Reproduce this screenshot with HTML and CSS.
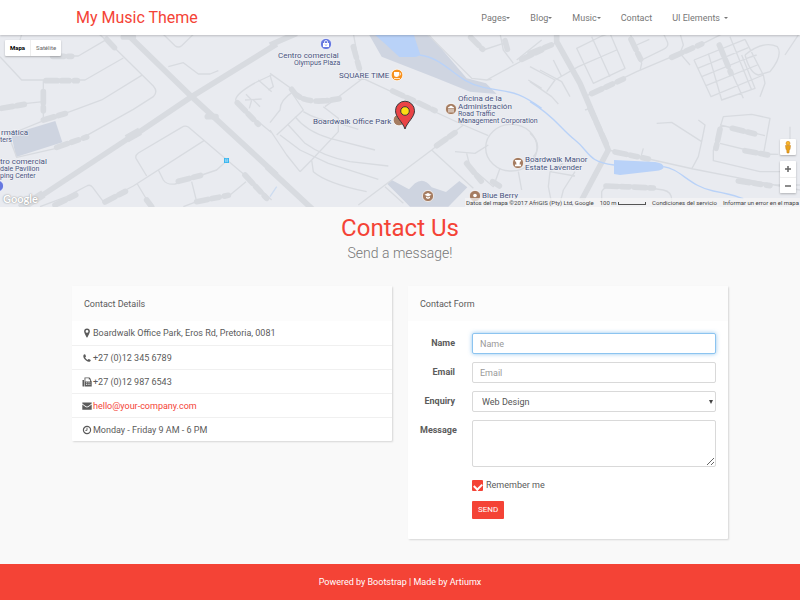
FILE: index.html
```html
<!DOCTYPE html>
<html lang="en">
<head>
<meta charset="utf-8">
<meta name="viewport" content="width=device-width, initial-scale=1">
<title>Contact Us - My Music Theme</title>
<link rel="stylesheet" href="styles.css">
</head>
<body>
<header class="navbar">
  <div class="container navbar-inner">
    <a class="brand" href="#">My Music Theme</a>
    <nav class="nav">
      <a class="nav-link has-menu" href="#">Pages</a>
      <a class="nav-link has-menu" href="#">Blog</a>
      <a class="nav-link has-menu" href="#">Music</a>
      <a class="nav-link" href="#">Contact</a>
      <a class="nav-link has-menu spaced" href="#">UI Elements</a>
    </nav>
  </div>
</header>

<section class="map" aria-label="Map">
  <svg class="map-canvas" viewBox="0 35 800 172" preserveAspectRatio="xMidYMid slice">
    <!-- west -->
    <g transform="scale(.33333)" class="roads">
      <path class="lot" d="M34 403 166 363 187 427 48 471Z"/>
      <path class="major" d="M374 95 575 290 830 525"/>
      <path class="major" d="M830 132 575 290 400 408"/>
      <path class="mid" d="M420 392 120 590"/>
      <path class="wide" d="M420 394 380 416M130 582 60 625"/>
      <path class="minor" d="M295 100 345 145 460 258Q475 275 460 290L400 328 250 412 165 446 50 472 25 405 140 358 210 335 305 300 425 226M370 174 255 240H65L0 170M60 120 66 100M175 168H235L320 118M130 240V360M0 325 80 310 130 305M490 103 525 137Q535 145 545 137L580 103M505 200 550 188 595 222H630L655 212M120 620 200 590 260 558Q270 552 278 562L310 605M310 605 400 558 612 422M440 528 408 475Q405 466 415 459L545 382Q555 375 565 381L740 530 815 600M475 510 490 540Q500 555 525 552L650 510 680 482M575 545 590 605 690 585 738 545M412 552 450 615M590 605 550 620M815 225 770 246Q708 280 707 300L720 320 815 398M775 240 815 275M738 283 755 300 748 325M735 300 785 297M760 300 780 320"/>
      <path class="smudge" d="M320 118 350 150M138 242H232M158 169H215M130 275V332M5 325 80 312M130 360 205 338M170 442 260 411M535 544 610 524M590 605 685 586M735 525 800 595M315 606 388 568M165 615 238 580M440 600 455 620M712 308 775 373M622 350H648M370 111H400"/>
      <rect x="672" y="474" width="15" height="15" fill="#35b4ef"/>
      <path class="transit" d="M676 477H683V484H676ZM676 481H683M677 484V487M682 484V487"/>
    </g>
    <!-- centre -->
    <g transform="translate(270) scale(.33333)" class="roads">
      <path class="park" d="M295 100 335 170 500 235 600 275 680 282 648 250 590 235 475 100Z"/>
      <path class="water" d="M310 100 350 136 388 171H435Q456 168 448 155L430 100Z"/>
      <path class="lot" d="M352 552 395 595 420 620H535L592 562 568 543 528 576 485 562Q462 530 435 550L417 568 365 540Z"/>
      <path class="major" d="M0 135 80 100"/>
      <path class="major" d="M-10 500 130 630"/>
      <path class="minor" d="M250 100 275 238 190 302M70 270 0 220M70 275Q30 300 30 330L0 368M160 320 205 355V395L125 480 90 515M190 302 165 320M265 238H285L580 375 655 407M580 375 485 450 265 615M485 450 610 565M100 335Q140 360 200 368L265 388M75 350Q110 395 180 415L315 450M55 375 105 430Q160 470 240 485L355 498M30 405 90 450 175 490 325 538M125 480 130 515Q170 550 290 575M0 390 50 465 90 515M70 285 100 330 20 405M0 225 10 260-5 270M470 100 500 130 605 235 650 240 760 180M650 240 665 238M595 100 640 150 700 130M690 100 700 150 730 190M740 180 815 120M775 240 815 265M555 455 615 460 655 435M590 460 600 500 670 560 690 505M745 515 755 570M345 560 400 610"/>
      <ellipse class="minor" cx="724" cy="443" rx="77" ry="70"/>
      <path class="smudge" d="M250 140 268 205M65 268Q90 310 170 302L215 295M368 273 495 332M500 437 555 398M590 490 635 545M668 545 688 558M602 112 638 148M705 122 712 148M755 178 815 150"/>
      <path class="stream" d="M448 165C530 175 555 245 640 262S740 270 815 325"/>
      <path class="brook" d="M0 590 20 560"/>
    </g>
    <!-- east -->
    <g transform="translate(530) scale(.33333)" class="roads">
      <path class="major" d="M80 100V125L150 250 235 450 155 600"/>
      <path class="minor" d="M0 165 75 130M165 290 320 215 520 130 580 100M75 240 145 200 260 150M50 275 75 240 0 200M30 210 95 245 120 290M70 180 95 230M0 245 65 290 85 312M140 145 215 108 240 100 285 205 190 250ZM185 110 240 230M300 100 335 190 330 212M335 180 400 148Q418 140 412 125L400 100M320 135 358 118M450 100 460 135 450 160 480 195M492 180 645 118M492 180 543 290 700 225 645 118M503 205 655 143M515 230 668 168M528 257 682 195M535 160 575 300 675 265 635 165M565 130 640 295M600 110 665 270M645 165Q660 220 685 225L720 215Q760 165 742 140Q700 120 645 165M650 175 680 165M700 225 705 250 690 290M765 165 805 105M235 450 490 507 810 570M380 370 425 367 515 425M505 360 525 375 515 425 505 470 485 507M340 445 333 470M550 450 580 350 665 343 720 355 700 465M570 375 705 407M570 430 700 462 745 463M550 450V482L690 515H750M780 380V420M735 555H810M215 620V575Q225 550 300 555L400 570Q425 575 425 600M135 515 100 570 90 610M60 515 135 528M60 515 55 560 65 610M60 515 100 490M0 400Q40 435 10 470M165 330 180 325"/>
      <path class="smudge" d="M0 160 68 133M185 281 280 237M303 118 332 178M425 172 515 132M568 135 603 220M180 325 228 430M255 456 355 477M570 388 558 445M607 385 676 402M645 452 715 465M625 543 720 557M228 558 370 564"/>
      <path class="water" d="M252 480 375 486Q400 490 401 500T375 513L270 525 252 522Z"/>
      <path class="stream" d="M0 305C75 350 90 385 135 420S170 485 252 495M400 500C450 505 480 560 550 573S620 590 640 596"/>
    </g>

    <!-- places -->
    <g class="poi">
      <text x="278" y="58">Centro comercial</text>
      <text class="sub" x="294" y="65">Olympus Plaza</text>
      <text x="339" y="78">SQUARE TIME</text>
      <text x="313" y="124">Boardwalk Office Park</text>
      <text x="458" y="101">Oficina de la</text>
      <text x="458" y="109">Administración</text>
      <text class="sub" x="458" y="116">Road Traffic</text>
      <text class="sub" x="458" y="123">Management Corporation</text>
      <text x="525" y="162">Boardwalk Manor</text>
      <text x="525" y="170">Estate Lavender</text>
      <text x="482" y="198">Blue Berry</text>
      <text x="1" y="135">rmática</text>
      <text class="sub" x="0" y="142">ters</text>
      <text x="0" y="164">tro comercial</text>
      <text class="sub" x="0" y="171">dale Pavilion</text>
      <text class="sub" x="0" y="178">ping Center</text>
    </g>
    <g stroke="#fff" stroke-width=".7">
      <circle cx="326" cy="44" r="5.6" fill="#6678e0"/>
      <circle cx="-2" cy="186" r="5.6" fill="#6678e0"/>
      <circle cx="397" cy="75" r="5.8" fill="#f7911e"/>
      <g fill="#a57c61">
        <circle cx="399" cy="120" r="5.8"/>
        <circle cx="451" cy="109" r="5.6"/>
        <circle cx="518" cy="163" r="5.6"/>
        <circle cx="428" cy="196" r="5.6"/>
        <circle cx="475" cy="196" r="5.6"/>
      </g>
    </g>
    <g fill="#fff">
      <path d="M323 43H329V47H323Z"/>
      <path d="M324.500 43V42A1.500 1.500 0 0 1 327.500 42V43" fill="none" stroke="#fff" stroke-width=".8"/>
      <path d="M324.700 44.500Q326 46.500 327.300 44.500" fill="none" stroke="#6678e0" stroke-width=".6"/>
      <path d="M394 72H399V75Q399 77 396.500 77T394 75ZM394 78H400V78.700H394Z"/>
      <path d="M399 73H400.500V75H399" fill="none" stroke="#fff" stroke-width=".6"/>
      <path d="M448 107.500 451 105.500 454 107.500V108.300H448ZM448.500 109H449.500V111H448.500ZM450.500 109H451.500V111H450.500ZM452.500 109H453.500V111H452.500ZM448 111.500H454V112.300H448Z"/>
      <path d="M515 160H521V161.500H520L519.500 164.500H521V166.200H515V164.500H516.500L516 161.500H515Z"/>
      <path d="M424.500 194.700 428 193 431.500 194.700 428 196.500ZM426 196.500 428 197.500 430 196.500V198L428 199 426 198Z"/>
      <circle cx="475" cy="195.500" r="1.800"/>
    </g>
    <path d="M405 129C402.500 121.500 395.500 117.500 395.500 110.700A9.500 9.500 0 0 1 414.500 110.700C414.500 117.500 407.500 121.500 405 129Z" fill="#ea4345" stroke="#39383b"/>
    <circle cx="405" cy="111" r="4.300" fill="#fcdc14" stroke="#39383b"/>
  </svg>

  <div class="map-types">
    <button class="map-type active" type="button">Mapa</button>
    <button class="map-type" type="button">Satélite</button>
  </div>
  <div class="map-controls">
    <button class="map-button" type="button" aria-label="Street View">
      <svg viewBox="0 0 16 16"><path d="M5.500 6.500H10.500L10 10.500H9.300L9 14H7L6.700 10.500H6Z" fill="#e8a21c" stroke="#c57a14" stroke-width=".5"/><circle cx="8" cy="4.300" r="2" fill="#fbb829" stroke="#c57a14" stroke-width=".5"/></svg>
    </button>
    <div class="zoom-group">
      <button class="map-button" type="button" aria-label="Zoom in"><svg viewBox="0 0 16 16"><path d="M5 8H11M8 5V11" stroke="#666" stroke-width="1.500"/></svg></button>
      <button class="map-button" type="button" aria-label="Zoom out"><svg viewBox="0 0 16 16"><path d="M5 8H11" stroke="#666" stroke-width="1.500"/></svg></button>
    </div>
  </div>
  <a class="google" href="#">Google</a>
  <div class="map-legal">
    <span>Datos del mapa ©2017 AfriGIS (Pty) Ltd, Google</span>
    <span class="scale">100 m <i class="scale-bar"></i></span>
    <a href="#">Condiciones del servicio</a>
    <a href="#">Informar un error en el mapa</a>
  </div>
</section>

<main class="container">
  <div class="heading">
    <h1>Contact Us</h1>
    <p>Send a message!</p>
  </div>
  <div class="columns">
    <section class="card">
      <h2 class="card-title">Contact Details</h2>
      <ul class="details">
        <li><svg class="icon" viewBox="0 0 10 10"><path fill-rule="evenodd" d="M5 .5A2.900 2.900 0 0 1 7.900 3.400C7.900 4.500 6.500 7 5.600 9Q5 10 4.400 9C3.500 7 2.100 4.500 2.100 3.400A2.900 2.900 0 0 1 5 .5ZM5 2A1.400 1.400 0 1 0 5 4.800 1.400 1.400 0 0 0 5 2Z"/></svg>Boardwalk Office Park, Eros Rd, Pretoria, 0081</li>
        <li><svg class="icon" viewBox="0 0 10 10"><path d="M1.500 2Q2.300 1 3.100 1.300L4 3.200Q4.100 3.600 3.100 4.400 4 6.100 5.700 6.900 6.500 5.800 6.900 6L8.700 7Q8.900 7.900 8 8.500 6.500 9.300 4 7.500C2 6 .8 4 1.500 2Z"/></svg>+27 (0)12 345 6789</li>
        <li><svg class="icon" viewBox="0 0 10 10"><path fill-rule="evenodd" d="M.5 3H2V9.500H1Q.5 9.500.5 9ZM2.500 9.500V.5H7.500L8.800 2V3.500Q9.700 3.500 9.700 4.500V9.500ZM3.400 1.300V4.400H8V2.600H6.800V1.300ZM4 5.500V6.300H5V5.500ZM5.700 5.500V6.300H6.700V5.500ZM7.400 5.500V6.300H8.400V5.500ZM4 7.200V8H5V7.200ZM5.700 7.200V8H6.700V7.200ZM7.400 7.200V8H8.400V7.200Z"/></svg>+27 (0)12 987 6543</li>
        <li><svg class="icon" viewBox="0 0 10 10"><path d="M.3 1.500H9.700V2.500Q7 4.700 5 5.700 3 4.700.3 2.500ZM.3 3.600Q3.500 6.300 5 6.600 6.500 6.300 9.700 3.600V8.700H.3Z"/></svg><a href="#">hello@your-company.com</a></li>
        <li><svg class="icon" viewBox="0 0 10 10"><circle cx="5" cy="5" r="3.600" fill="none" stroke="currentColor" stroke-width="1.200"/><path d="M5 2.700V5.400H3.300" fill="none" stroke="currentColor" stroke-width=".9"/></svg>Monday - Friday 9 AM - 6 PM</li>
      </ul>
    </section>

    <section class="card">
      <h2 class="card-title">Contact Form</h2>
      <form class="form">
        <label for="name">Name</label>
        <input class="control" id="name" type="text" placeholder="Name" autofocus>
        <label for="email">Email</label>
        <input class="control" id="email" type="email" placeholder="Email">
        <label for="enquiry">Enquiry</label>
        <div class="select-wrap">
          <select class="control" id="enquiry"><option>Web Design</option></select>
        </div>
        <label for="message">Message</label>
        <textarea class="control" id="message"></textarea>
        <div class="form-end">
          <label class="remember"><input type="checkbox" checked>Remember me</label>
          <button class="send" type="submit">SEND</button>
        </div>
      </form>
    </section>
  </div>
</main>

<footer class="footer">Powered by Bootstrap | Made by Artiumx</footer>
</body>
</html>
```

FILE: styles.css
```css
* { box-sizing: border-box; }

body {
  display: flex;
  flex-direction: column;
  min-height: 100vh;
  margin: 0;
  background: #f9f9f9;
  color: #5b5b5b;
  font: 9px/14px Roboto, sans-serif;
}

a { color: #f44336; text-decoration: none; }
button, input, select, textarea { font: inherit; }
h1, h2, p, ul { margin: 0; padding: 0; font-weight: 400; }

.container { width: 82%; margin: 0 auto; }

/* Navigation */
.navbar {
  position: relative;
  z-index: 1;
  background: #fff;
  box-shadow: 0 1px 2px rgba(0, 0, 0, .2);
}
.navbar-inner {
  display: flex;
  align-items: center;
  justify-content: space-between;
  padding-left: 4px;
  height: 35px;
}
.brand { font-size: 16px; line-height: 20px; }
.nav { display: flex; gap: 20px; }
.nav-link { color: #777; }
.has-menu::after {
  content: "";
  display: inline-block;
  border: 2px solid transparent;
  border-top-color: currentColor;
  border-bottom: 0;
  vertical-align: middle;
}
.spaced::after { margin-left: 4px; }

/* Map */
.map { position: relative; height: 172px; overflow: hidden; background: #e9ebf0; }
.map-canvas { display: block; width: 100%; height: 100%; }
.roads path, .roads ellipse { fill: none; stroke: #d8dbe0; stroke-linejoin: round; }
.roads .minor { stroke-width: 4; }
.roads .mid { stroke-width: 16; }
.roads .major { stroke-width: 17; }
.roads .wide { stroke-width: 24; }
.roads .smudge { stroke-width: 17; stroke-linecap: round; stroke-dasharray: 34 13 22 16; }
.roads .lot { fill: #ced4e0; stroke: none; }
.roads .park { fill: #cfd5e1; stroke: none; }
.roads .water { fill: #b9d2f8; stroke: none; }
.roads .stream { stroke: #b9d2f8; stroke-width: 4; }
.roads .brook { stroke: #cddcf0; stroke-width: 4; }
.roads .transit { stroke: #fff; stroke-width: 1; }
.poi {
  fill: #46517c;
  stroke: #f4f5f8;
  stroke-width: 1px;
  paint-order: stroke;
  font-size: 8px;
}
.poi .sub { font-size: 7px; }

.map-types {
  position: absolute;
  top: 5px;
  left: 5px;
  display: flex;
  background: #fff;
  border-radius: 1px;
  box-shadow: 0 1px 2px rgba(0, 0, 0, .25);
}
.map-type {
  padding: 0 5px;
  height: 16px;
  border: 0;
  background: none;
  color: #666;
  font-size: 6px;
}
.map-type.active { border-right: 1px solid #eee; color: #000; font-weight: 700; }

.map-controls {
  position: absolute;
  right: 4px;
  bottom: 14px;
  display: grid;
  gap: 6px;
}
.map-button {
  display: block;
  width: 16px;
  height: 16px;
  padding: 0;
  border: 0;
  border-radius: 1px;
  background: #fff;
}
.map-button svg { display: block; width: 16px; height: 16px; }
.map-controls > .map-button, .zoom-group { box-shadow: 0 1px 2px rgba(0, 0, 0, .25); }
.zoom-group .map-button + .map-button { border-top: 1px solid #eee; }

.google {
  position: absolute;
  left: 3px;
  bottom: 1px;
  color: #fff;
  font: 700 11px/14px Lato, sans-serif;
  text-shadow: 0 0 1px #999, 0 0 2px #aaa;
}
.map-legal {
  position: absolute;
  right: 0;
  bottom: 0;
  display: flex;
  gap: 6px;
  padding: 0 1px;
  height: 9px;
  background: rgba(245, 245, 245, .7);
  color: #444;
  font-size: 6px;
  line-height: 9px;
  white-space: nowrap;
}
.map-legal a { color: #444; }
.scale-bar {
  display: inline-block;
  width: 28px;
  height: 3px;
  border: 1px solid #555;
  border-top: 0;
}

/* Page heading */
.heading { padding-top: 7px; text-align: center; }
.heading h1 { color: #f44336; font-size: 24px; line-height: 28px; }
.heading p { color: #777; font-size: 14px; font-weight: 300; line-height: 22px; }

/* Cards */
.columns {
  display: grid;
  grid-template-columns: 1fr 1fr;
  align-items: start;
  gap: 16px;
  padding: 22px 0 25px;
}
.card {
  background: #fff;
  border-radius: 1px;
  box-shadow: 1px 1px 2px rgba(0, 0, 0, .14);
}
.card-title {
  padding: 11px 12px 10px;
  background: #fcfcfc;
  font-size: 9px;
  line-height: 14px;
}
.details { list-style: none; }
.details li {
  display: flex;
  align-items: center;
  height: 24px;
  padding-left: 10px;
}
.details li + li { border-top: 1px solid #f0f0f0; }
.icon { width: 10px; height: 10px; margin-right: 1px; fill: currentColor; }

/* Form */
.form {
  display: grid;
  grid-template-columns: 35px 1fr;
  gap: 8px 17px;
  padding: 12px 12px 20px;
}
.form > label { padding-top: 3px; font-weight: 700; text-align: right; }
.control {
  display: block;
  width: 100%;
  height: 21px;
  padding: 0 7px;
  border: 1px solid #d9d9d9;
  border-radius: 2px;
  outline: 0;
  background: #fff;
  color: #555;
}
.control::placeholder { color: #999; }
.control:focus { border-color: #8cc4f0; box-shadow: 0 0 4px rgba(102, 175, 233, .7); }
.select-wrap { position: relative; }
.select-wrap::after {
  content: "";
  position: absolute;
  top: 9px;
  right: 3px;
  border: 2px solid transparent;
  border-top: 4px solid #444;
  border-bottom: 0;
}
select.control { padding-left: 9px; appearance: none; }
textarea.control { height: 47px; resize: vertical; }
.form-end {
  grid-column: 2;
  display: grid;
  justify-items: start;
  gap: 9px;
  padding-top: 3px;
}
.remember { display: flex; align-items: center; gap: 3px; }
.remember input {
  display: grid;
  justify-items: center;
  align-content: start;
  width: 11px;
  height: 11px;
  margin: 0;
  padding-top: 3px;
  border-radius: 1px;
  appearance: none;
  background: #f44336;
}
.remember input:checked::after {
  content: "";
  width: 6px;
  height: 4px;
  border: solid #fff;
  border-width: 0 0 2px 2px;
  transform: rotate(-45deg);
}
.send {
  height: 18px;
  padding: 0 6px;
  border: 0;
  border-radius: 1px;
  background: #f44336;
  color: #fff;
  font-size: 8px;
}

.footer {
  margin-top: auto;
  padding: 11px;
  background: #f44336;
  color: #fff;
  text-align: center;
}
```
